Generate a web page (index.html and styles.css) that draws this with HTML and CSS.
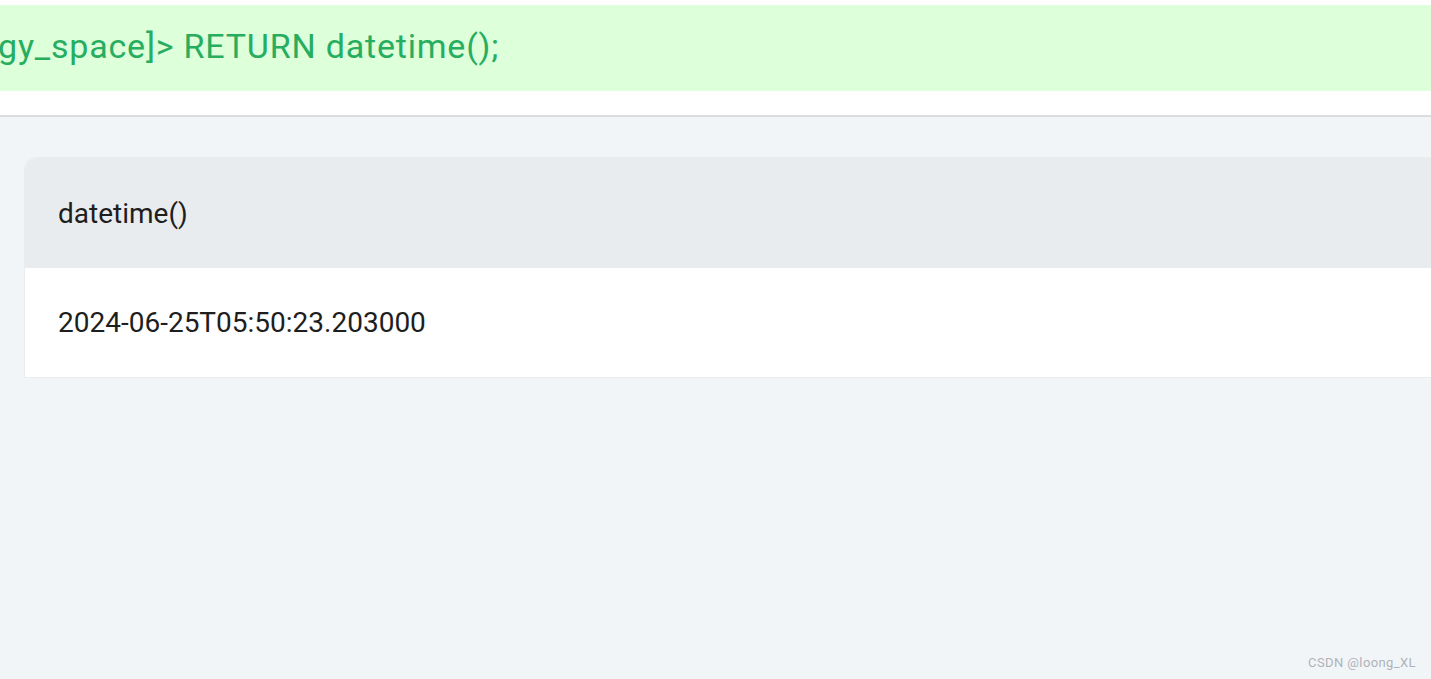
FILE: index.html
```html
<!DOCTYPE html>
<html lang="en">
<head>
  <meta charset="UTF-8">
  <title>Query Result</title>
  <link rel="stylesheet" href="styles.css">
</head>
<body>

<div class="console">
  <div class="statement">gy_space]&gt; RETURN datetime();</div>
</div>

<div class="result">
  <div class="table-card">
    <div class="row head">datetime()</div>
    <div class="row">2024-06-25T05:50:23.203000</div>
  </div>
</div>

<div class="watermark">CSDN @loong_XL</div>

</body>
</html>
```

FILE: styles.css
```css
* {
  box-sizing: border-box;
  margin: 0;
  padding: 0;
  font-family: Roboto, 'Noto Sans', sans-serif;
}

body {
  background-color: #f2f5f8;
  width: 1431px;
  height: 679px;
  overflow: hidden;
}

.console {
  background: #fff;
  padding-top: 5px;
  height: 117px;
  border-bottom: 2px solid #dcdcdc;
  overflow: hidden;
}

/* the prompt is scrolled, so its start is cut by the left edge */
.statement {
  background: #ddffd9;
  height: 86px;
  display: flex;
  align-items: center;
  color: #26ad60;
  font-size: 34px;
  letter-spacing: 0.8px;
  white-space: nowrap;
  padding-bottom: 4px;
  margin-left: -2px;
}

.result {
  padding: 40px 0 0 24px;
}

.table-card {
  border: 1px solid #ececec;
  border-right: none;
  border-top-left-radius: 12px;
  overflow: hidden;
  background: #fff;
}

.row {
  height: 109px;
  display: flex;
  align-items: center;
  padding-left: 33px;
  font-size: 28px;
  color: #1e1e1e;
}

.row.head {
  background: #e9ecef;
  height: 110px;
}

.watermark {
  position: absolute;
  right: 15px;
  bottom: 9px;
  font-size: 13px;
  letter-spacing: 0.4px;
  color: #aeb3b8;
}
```
